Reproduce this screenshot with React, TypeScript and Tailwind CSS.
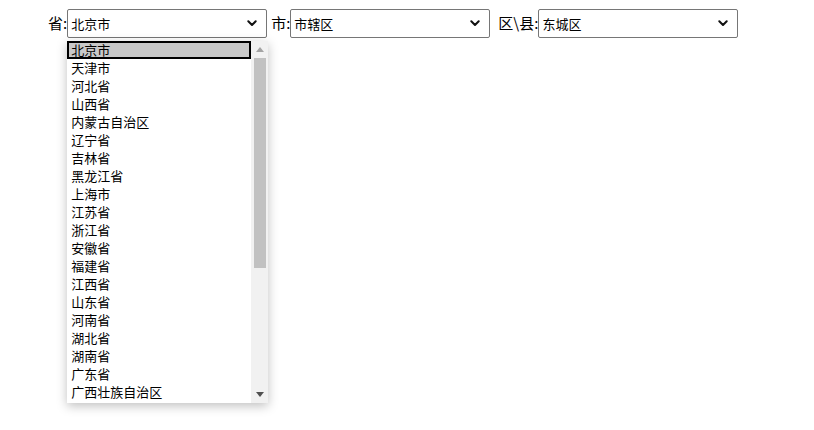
import React from "react";

const provinces = [
  "北京市","天津市","河北省","山西省","内蒙古自治区","辽宁省","吉林省","黑龙江省","上海市","江苏省",
  "浙江省","安徽省","福建省","江西省","山东省","河南省","湖北省","湖南省","广东省","广西壮族自治区",
];

const font = { fontFamily: '"Noto Sans CJK SC", "Noto Sans", sans-serif' };

function Chevron() {
  return (
    <svg width="10" height="7" viewBox="0 0 10 7" className="shrink-0">
      <path d="M1.3 1.3 L5 5 L8.7 1.3" fill="none" stroke="#111" strokeWidth="2" strokeLinecap="round" strokeLinejoin="round" />
    </svg>
  );
}

function FakeSelect({ value }: { value: string }) {
  return (
    <div className="w-[200px] h-[29px] border border-[#767676] rounded-[2px] bg-white flex items-center justify-between pl-[3px] pr-[9px] text-[13px] text-black">
      <span>{value}</span>
      <Chevron />
    </div>
  );
}

export default function App() {
  return (
    <div className="w-[814px] h-[430px] bg-white relative text-black" style={font}>
      <div className="flex items-center pt-[9px] pl-[48px] text-[15px]">
        <span>省:</span>
        <div className="relative">
          <FakeSelect value="北京市" />
          <div className="absolute left-0 top-[32px] w-[201px] h-[362px] bg-white shadow-[0_3px_10px_rgba(0,0,0,0.25)] flex z-10">
            <div className="flex-1 flex flex-col text-[13px] leading-[18px]">
              {provinces.map((p, i) =>
                i === 0 ? (
                  <div key={p} className="h-[18px] bg-[#c8c8c8] border-2 border-black pl-[2px] leading-[14px] flex items-center">
                    {p}
                  </div>
                ) : (
                  <div key={p} className="h-[18px] pl-[4px] flex items-center">{p}</div>
                )
              )}
            </div>
            <div className="w-[17px] bg-[#f1f1f1] flex flex-col items-center">
              <div className="h-[17px] flex items-center justify-center">
                <svg width="8" height="5" viewBox="0 0 8 5"><path d="M0 5 L4 0 L8 5 Z" fill="#a3a3a3" /></svg>
              </div>
              <div className="w-[12px] h-[210px] bg-[#c1c1c1]" />
              <div className="flex-1" />
              <div className="h-[17px] flex items-center justify-center">
                <svg width="8" height="5" viewBox="0 0 8 5"><path d="M0 0 L8 0 L4 5 Z" fill="#505050" /></svg>
              </div>
            </div>
          </div>
        </div>
        <span className="ml-[4px]">市:</span>
        <FakeSelect value="市辖区" />
        <span className="ml-[8px]">区\县:</span>
        <FakeSelect value="东城区" />
      </div>
    </div>
  );
}
